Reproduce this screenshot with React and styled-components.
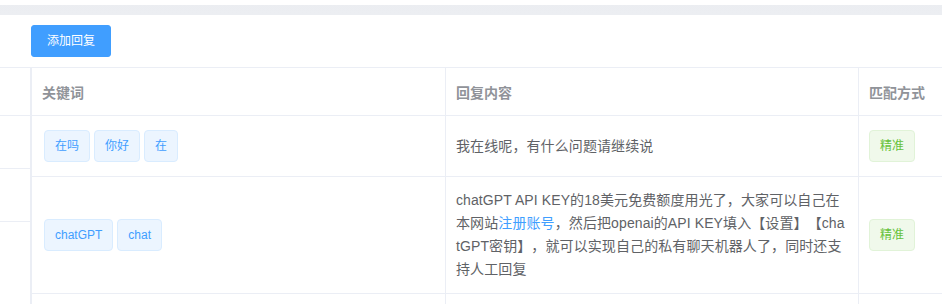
import React from "react";
import styled, { createGlobalStyle } from "styled-components";

const GlobalStyle = createGlobalStyle`
  html, body {
    margin: 0;
    padding: 0;
    background: #fff;
    overflow: hidden;
  }
  body {
    font-family: "Liberation Sans", "Noto Sans CJK SC", sans-serif;
    color: #606266;
    text-spacing-trim: space-all;
  }
`;

const line = "#ebeef5";

const Page = styled.div`
  width: 942px;
  height: 304px;
  overflow: hidden;
`;

const HeaderShadow = styled.div`
  height: 5px;
  border-bottom: 10px solid transparent;
  border-image: linear-gradient(#e1e3e8, #eceef2) 1;
  border-image-width: 0 0 10px 0;
  background: #fff;
`;

const Toolbar = styled.div`
  display: flex;
  padding: 10px 31px;
`;

const Button = styled.button`
  height: 32px;
  padding: 0 15px;
  border: 1px solid #409eff;
  border-radius: 3px;
  background: #409eff;
  color: #fff;
  font-family: inherit;
  font-size: 12px;
  line-height: 30px;
  cursor: pointer;
`;

const Body = styled.div`
  display: flex;
  border-top: 1px solid ${line};
  height: 236px;
`;

const Strip = styled.div`
  width: 30px;
  flex-shrink: 0;
  border-right: 1px solid ${line};
  display: flex;
  flex-direction: column;
`;

const StripRow = styled.div`
  height: ${(p) => p.h}px;
  border-bottom: 1px solid ${line};
`;

const Table = styled.div`
  display: grid;
  grid-template-columns: 414px 413px 200px;
  align-content: start;
  border-left: 1px solid ${line};
  flex-shrink: 0;
`;

const Cell = styled.div`
  box-sizing: border-box;
  min-height: ${(p) => p.h}px;
  padding: 0 10px;
  border-right: 1px solid ${line};
  border-bottom: 1px solid ${line};
  display: flex;
  align-items: center;
  font-size: 14px;
  word-break: break-all;
`;

const HeadCell = styled(Cell)`
  color: #909399;
  font-weight: 700;
`;

const Text = styled.div`
  line-height: 23px;
  letter-spacing: 0.1px;
  color: #606266;
  padding: 12px 0;
`;

const Link = styled.span`
  color: #409eff;
`;

const Tags = styled.div`
  display: flex;
  gap: 4px;
  padding-left: 2px;
`;

const Tag = styled.span`
  box-sizing: border-box;
  height: 32px;
  padding: 0 10px;
  line-height: 30px;
  font-size: 12px;
  border-radius: 4px;
  border: 1px solid ${(p) => (p.green ? "#e1f3d8" : "#d9ecff")};
  background: ${(p) => (p.green ? "#f0f9eb" : "#ecf5ff")};
  color: ${(p) => (p.green ? "#67c23a" : "#409eff")};
  white-space: nowrap;
`;

const rows = [
  {
    keys: ["在吗", "你好", "在"],
    h: 61,
    reply: <>我在线呢，有什么问题请继续说</>,
  },
  {
    keys: ["chatGPT", "chat"],
    h: 117,
    reply: (
      <>
        chatGPT API KEY的18美元免费额度用光了，大家可以自己在本网站
        <Link>注册账号</Link>
        ，然后把openai的API KEY填入【设置】【chatGPT密钥】，就可以实现自己的私有聊天机器人了，同时还支持人工回复
      </>
    ),
  },
];

export default function App() {
  return (
    <Page>
      <GlobalStyle />
      <HeaderShadow />
      <Toolbar>
        <Button>添加回复</Button>
      </Toolbar>
      <Body>
        <Strip>
          <StripRow h={47} />
          <StripRow h={52} />
          <StripRow h={52} />
        </Strip>
        <Table>
          <HeadCell h={48}>关键词</HeadCell>
          <HeadCell h={48}>回复内容</HeadCell>
          <HeadCell h={48}>匹配方式</HeadCell>
          {rows.map((r, i) => (
            <React.Fragment key={i}>
              <Cell h={r.h}>
                <Tags>
                  {r.keys.map((k) => (
                    <Tag key={k}>{k}</Tag>
                  ))}
                </Tags>
              </Cell>
              <Cell h={r.h}>
                <Text>{r.reply}</Text>
              </Cell>
              <Cell h={r.h}>
                <Tag green>精准</Tag>
              </Cell>
            </React.Fragment>
          ))}
          <Cell h={40} />
          <Cell h={40} />
          <Cell h={40} />
        </Table>
      </Body>
    </Page>
  );
}
